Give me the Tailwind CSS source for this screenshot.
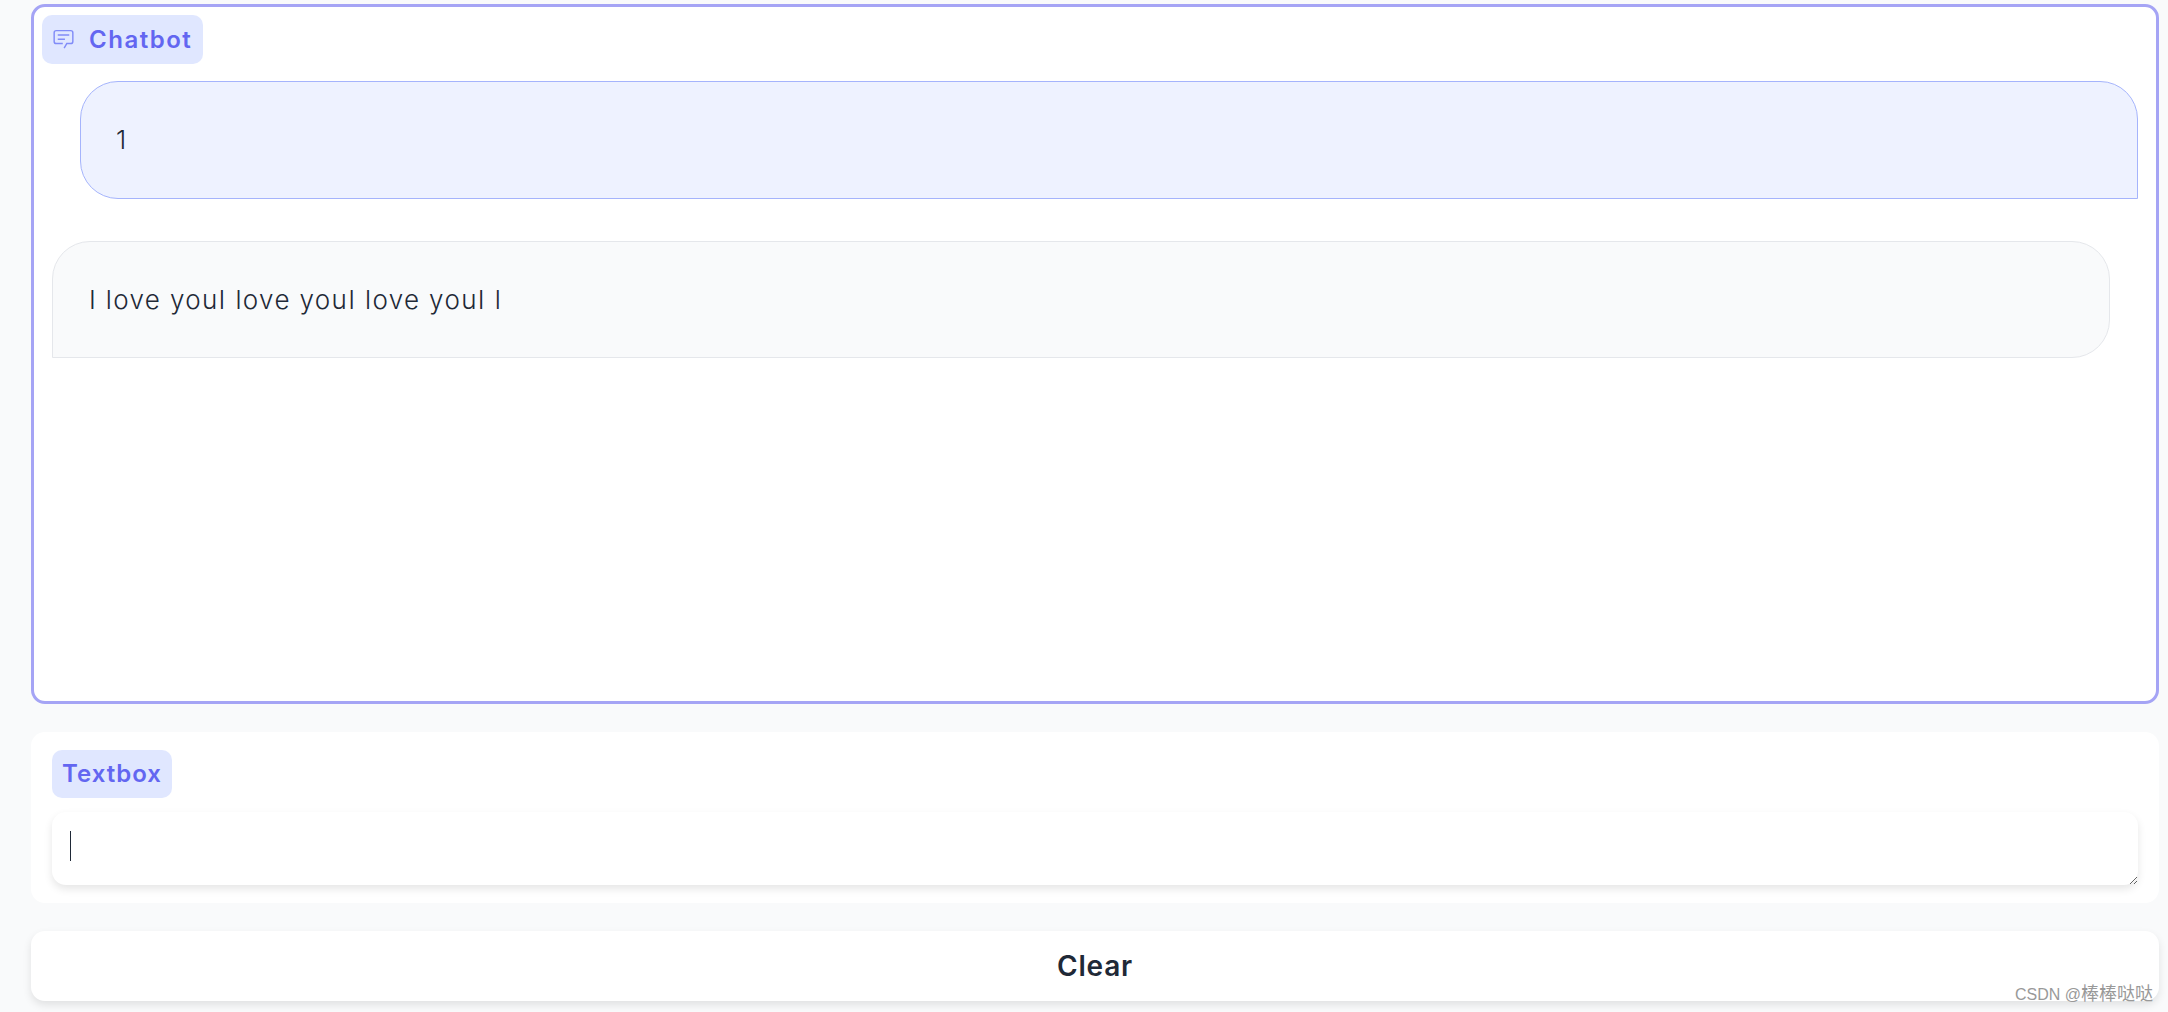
<!DOCTYPE html>
<html lang="en">
<head>
  <meta charset="UTF-8">
  <title>Chatbot</title>
  <script src="https://cdn.jsdelivr.net/npm/@tailwindcss/browser@4"></script>
</head>
<body class="bg-[#f9fafb] font-['Inter',sans-serif] text-[#1f2937] h-[1012px] overflow-hidden">
  <div class="relative flex flex-col pt-[4px] pl-[31px] pr-[9px] h-full">

    <!-- chatbot panel -->
    <div class="h-[700px] border-[3px] border-[#a5a4f5] rounded-[14px] bg-white pt-[8px] flex flex-col">
      <div class="ml-[8px] w-[161px] h-[49px] rounded-[10px] bg-[#e0e7ff] flex items-center pl-[10px] gap-[14px] text-[#6366f1] font-semibold text-[24px] tracking-[1.5px]">
        <svg class="w-[23px] h-[23px] -mt-[2px] text-[#818cf8]" viewBox="0 0 32 32" fill="currentColor">
          <path d="M17.74 30L16 29l4-7h6a2 2 0 0 0 2-2V8a2 2 0 0 0-2-2H6a2 2 0 0 0-2 2v12a2 2 0 0 0 2 2h9v2H6a4 4 0 0 1-4-4V8a4 4 0 0 1 4-4h20a4 4 0 0 1 4 4v12a4 4 0 0 1-4 4h-4.84z"/>
          <path d="M8 10h16v2H8zm0 6h10v2H8z"/>
        </svg>
        <span>Chatbot</span>
      </div>
      <div class="mt-[17px] ml-[46px] w-[2058px] h-[118px] rounded-[38px] rounded-br-none border border-[#a5b4fc] bg-[#eef2ff] flex items-center pl-[35px] pb-[2px] text-[26px] font-[350] tracking-[1.35px]">1</div>
      <div class="mt-[42px] ml-[18px] w-[2058px] h-[117px] rounded-[38px] rounded-bl-none border border-[#e5e7eb] bg-[#f9fafb] flex items-center pl-[36px] text-[26px] font-[350] tracking-[1.35px]">I love youI love youI love youI l</div>
    </div>

    <!-- textbox block -->
    <div class="mt-[28px] h-[171px] rounded-[14px] bg-white px-[21px] pt-[18px]">
      <div class="w-[120px] h-[48px] rounded-[10px] bg-[#e0e7ff] flex items-center justify-center text-[#6366f1] font-semibold text-[24px] tracking-[1px]">Textbox</div>
      <div class="relative mt-[14px] h-[73px]">
        <textarea class="block w-full h-full rounded-[14px] bg-white shadow-[0_4px_8px_rgba(0,0,0,0.10)] resize-y outline-none"></textarea>
        <span class="absolute left-[18px] top-[19px] w-[1px] h-[30px] bg-[#1f2937]"></span>
      </div>
    </div>

    <!-- clear button -->
    <button class="mt-[28px] h-[70px] rounded-[14px] bg-white shadow-[0_4px_8px_rgba(0,0,0,0.10)] font-semibold text-[28px] tracking-[0.8px] text-[#1f2937]">Clear</button>

    <!-- watermark -->
    <span class="absolute right-[15px] top-[983px] font-['Liberation_Sans','Noto_Sans_CJK_SC',sans-serif] text-[16px] leading-[22px] text-[#999999]">CSDN @<span class="text-[18px]">棒棒哒哒</span></span>
  </div>
</body>
</html>
